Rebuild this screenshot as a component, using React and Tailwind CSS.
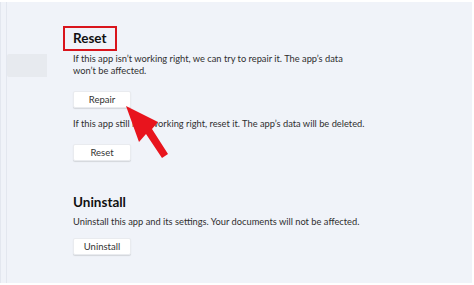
import React from 'react';

const font = { fontFamily: 'Lato, "Noto Sans", sans-serif' };

const ActionButton = ({ label }) => (
  <button className="w-[58px] h-[17px] bg-white rounded-[2px] shadow-[0_1px_1px_rgba(0,0,0,0.12)] border border-[#e9ebef] text-[9.5px] leading-none text-[#333]">
    {label}
  </button>
);

const Arrow = () => (
  <svg className="absolute left-[118px] top-[98px]" width="56" height="64" viewBox="0 0 56 64">
    <polygon points="7,6 20,42 27,34 43,58 49,54 33,29 39,22" fill="#e8141d" />
  </svg>
);

const App = () => {
  return (
    <div className="w-[474px] h-[285px] bg-white pt-[2px] pr-[2px] pb-[2px]" style={font}>
      <div className="relative h-full bg-[#f0f3f9] border-l border-[#e3e7ef] flex">
        <div className="w-[6px] border-r border-[#e3e7ef]" />
        {/* sidebar */}
        <div className="w-[40px] pt-[52px]">
          <div className="h-[23px] bg-[#e7eaef] rounded-l-[2px]" />
        </div>

        {/* content */}
        <div className="pl-[26px] pt-[24px] flex flex-col">
          <div className="-ml-[10px] self-start border-2 border-[#d9141c] px-[8px] h-[25px] flex items-center">
            <h2 className="text-[13.5px] font-bold text-[#111] leading-none">Reset</h2>
          </div>
          <p className="mt-[2px] text-[9.3px] leading-[12px] text-[#2f2f2f] w-[280px]">
            If this app isn’t working right, we can try to repair it. The app’s data won’t be affected.
          </p>
          <div className="mt-[8px]">
            <ActionButton label="Repair" />
          </div>
          <p className="mt-[9px] text-[9.3px] leading-[12px] text-[#2f2f2f]">
            If this app still isn’t working right, reset it. The app’s data will be deleted.
          </p>
          <div className="mt-[8px]">
            <ActionButton label="Reset" />
          </div>

          <h2 className="mt-[31px] text-[13.5px] font-bold text-[#111] leading-[18px]">Uninstall</h2>
          <p className="mt-[5px] text-[9.3px] leading-[12px] text-[#2f2f2f]">
            Uninstall this app and its settings. Your documents will not be affected.
          </p>
          <div className="mt-[4px]">
            <ActionButton label="Uninstall" />
          </div>
        </div>

        <Arrow />
      </div>
    </div>
  );
};

export default App;
